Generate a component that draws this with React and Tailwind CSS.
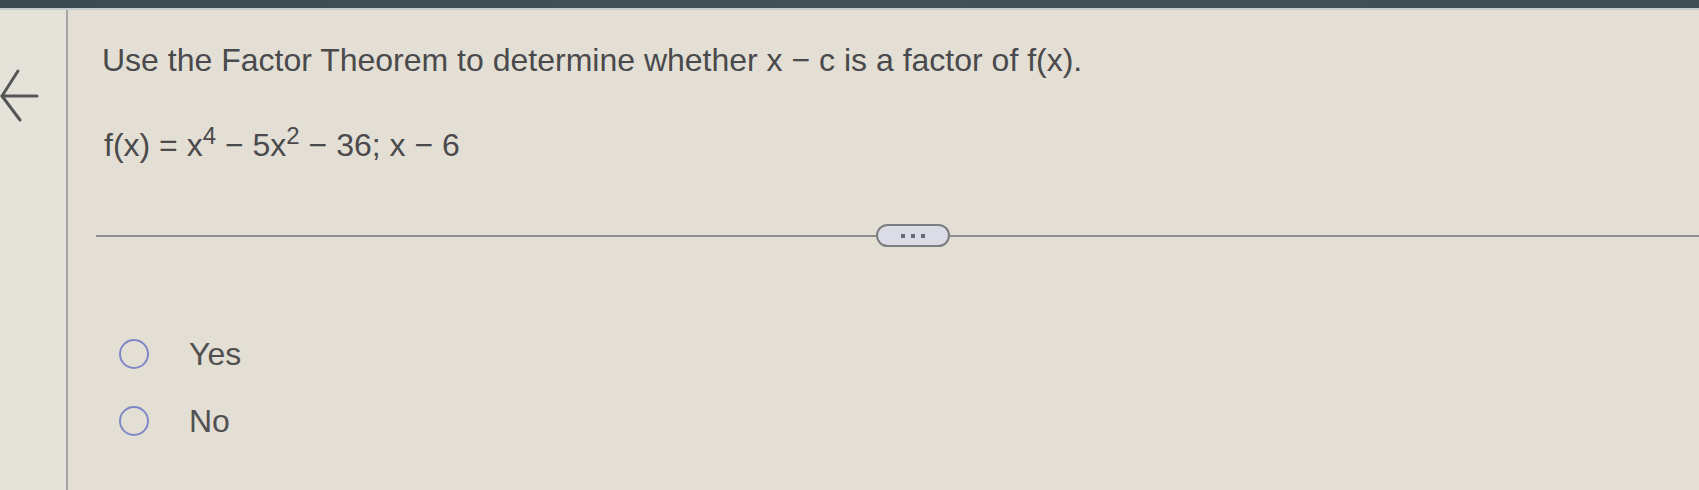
const textFont = { fontFamily: '"Liberation Sans", Arial, sans-serif' };

function BackArrow() {
  return (
    <svg width="40" height="60" viewBox="0 0 40 60" fill="none" className="block">
      <path d="M2 28 H37" stroke="#535556" strokeWidth="3" strokeLinecap="round" />
      <path d="M18 3 L2 28 L20 52" stroke="#535556" strokeWidth="3" strokeLinecap="round" strokeLinejoin="round" />
    </svg>
  );
}

function Choice({ label }) {
  return (
    <label className="flex cursor-pointer items-center">
      <span className="ml-[51px] h-[30px] w-[30px] rounded-full border-2 border-[#7f88c6] bg-transparent" />
      <span className="ml-[40px] text-[32px] leading-none text-[#515151]">{label}</span>
    </label>
  );
}

export default function App() {
  return (
    <div className="flex h-[490px] w-[1699px] flex-col overflow-hidden bg-[#e3dfd5]" style={textFont}>
      <div className="h-[10px] shrink-0 border-b-2 border-[#c5cbce] bg-gradient-to-r from-[#3c4a50] via-[#435157] to-[#3f4d53]" />

      <div className="flex flex-1">
        {/* side rail */}
        <div className="w-[68px] shrink-0 border-r-2 border-[#a3a6a5] bg-[#e5e2d9]">
          <div className="mt-[58px]">
            <BackArrow />
          </div>
        </div>

        {/* question */}
        <div className="flex-1">
          <p className="ml-[34px] mt-[34px] text-[32px] leading-none text-[#4a4a4c]">
            Use the Factor Theorem to determine whether x − c is a factor of f(x).
          </p>
          <p className="ml-[36px] mt-[53px] text-[32px] leading-none text-[#4a4a4c]">
            f(x) = x<sup>4</sup> − 5x<sup>2</sup> − 36; x − 6
          </p>

          <div className="mt-[63px] flex items-center">
            <div className="ml-[28px] h-[2px] w-[780px] bg-[#8c8f8b]" />
            <button
              type="button"
              className="flex h-[23px] w-[74px] items-center justify-center gap-[6px] rounded-full border-2 border-[#7b7e80] bg-[#dcdce6]"
            >
              <span className="h-[4px] w-[4px] bg-[#676a72]" />
              <span className="h-[4px] w-[4px] bg-[#676a72]" />
              <span className="h-[4px] w-[4px] bg-[#676a72]" />
            </button>
            <div className="h-[2px] flex-1 bg-[#8c8f8b]" />
          </div>

          <div className="mt-[91px] flex flex-col gap-[35px]">
            <Choice label="Yes" />
            <Choice label="No" />
          </div>
        </div>
      </div>
    </div>
  );
}
